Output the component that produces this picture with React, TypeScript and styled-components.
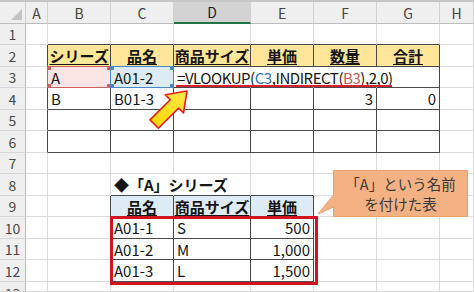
import React from "react";
import styled, { createGlobalStyle } from "styled-components";

const GlobalStyle = createGlobalStyle`
  html, body {
    margin: 0;
    padding: 0;
    background: #fff;
  }
  body {
    font-family: "Noto Sans CJK JP", "Noto Sans", sans-serif;
    overflow: hidden;
  }
`;

const COLS = ["A", "B", "C", "D", "E", "F", "G", "H"];
const COL_W = [22, 63, 63, 77, 63, 63, 63, 34];
const ROW_H = [21, 22, 21, 22, 21, 22, 21, 22, 21, 22, 21, 22, 10];

const GRID = "#dcdcdc";
const LINE = "#4a4a4a";
const GOLD = "#ffe699";
const ICE = "#ddebf7";

type CellDef = {
  text?: React.ReactNode;
  align?: "left" | "center" | "right";
  bold?: boolean;
  head?: boolean;
  fill?: string;
  refColor?: string;
};

const Formula = () => (
  <FormulaText>
    =VLOOKUP(<Ref $c="#2e75b6">C3</Ref>,INDIRECT(<Ref $c="#c55a5a">B3</Ref>),2,0)
  </FormulaText>
);

const cells: Record<string, CellDef> = {
  B2: { text: "シリーズ", head: true, fill: GOLD, align: "center" },
  C2: { text: "品名", head: true, fill: GOLD, align: "center" },
  D2: { text: "商品サイズ", head: true, fill: GOLD, align: "center" },
  E2: { text: "単価", head: true, fill: GOLD, align: "center" },
  F2: { text: "数量", head: true, fill: GOLD, align: "center" },
  G2: { text: "合計", head: true, fill: GOLD, align: "center" },
  B3: { text: "A", fill: "#fbe4e4", refColor: "#d06060" },
  C3: { text: "A01-2", fill: ICE, refColor: "#4a86c8" },
  D3: { text: <Formula /> },
  B4: { text: "B" },
  C4: { text: "B01-3" },
  F4: { text: "3", align: "right" },
  G4: { text: "0", align: "right" },
  C8: { text: "◆「A」シリーズ", bold: true },
  C9: { text: "品名", head: true, fill: ICE, align: "center" },
  D9: { text: "商品サイズ", head: true, fill: ICE, align: "center" },
  E9: { text: "単価", head: true, fill: ICE, align: "center" },
  C10: { text: "A01-1" },
  D10: { text: "S" },
  E10: { text: "500", align: "right" },
  C11: { text: "A01-2" },
  D11: { text: "M" },
  E11: { text: "1,000", align: "right" },
  C12: { text: "A01-3" },
  D12: { text: "L" },
  E12: { text: "1,500", align: "right" },
};

// cells whose text spills into the next column, so the gridline is hidden
const spill = new Set(["D3", "E3", "F3", "C8"]);

const inTable = (r: number, c: number) =>
  (r >= 2 && r <= 6 && c >= 1 && c <= 6) || (r >= 9 && r <= 12 && c >= 2 && c <= 4);

export default function App() {
  return (
    <>
      <GlobalStyle />
      <TopBar />
      <Sheet>
        <Corner />
        {COLS.map((l) => (
          <ColHead key={l} $active={l === "D"}>
            {l}
          </ColHead>
        ))}
        {ROW_H.map((h, i) => {
          const r = i + 1;
          return (
            <React.Fragment key={r}>
              <RowHead $short={h < 20}>{r}</RowHead>
              {COLS.map((l, c) => {
                const id = `${l}${r}`;
                const def = cells[id] ?? {};
                const right = spill.has(id)
                  ? "transparent"
                  : inTable(r, c) || inTable(r, c + 1)
                  ? LINE
                  : GRID;
                const bottom = inTable(r, c) || inTable(r + 1, c) ? LINE : GRID;
                return (
                  <Cell
                    key={id}
                    $right={right}
                    $bottom={bottom}
                    $fill={def.fill}
                    $align={def.align ?? "left"}
                    $bold={def.head || def.bold}
                    $under={def.head}
                    $ref={def.refColor}
                  >
                    {def.text}
                  </Cell>
                );
              })}
            </React.Fragment>
          );
        })}

        <FormulaLine />
        <NamedRange />
        <Arrow viewBox="0 0 44 44" width="44" height="44">
          <defs>
            <linearGradient id="ag" x1="0" y1="1" x2="1" y2="0">
              <stop offset="0" stopColor="#ffd400" />
              <stop offset="1" stopColor="#ffe94a" />
            </linearGradient>
          </defs>
          <polygon
            points="40,4 36.5,26 31.6,21.1 11.4,41.3 3,32.9 23.2,12.7 18.3,7.8"
            fill="url(#ag)"
            stroke="#e3201b"
            strokeWidth="1.6"
            strokeLinejoin="round"
          />
        </Arrow>
        <Callout>
          <CalloutShape viewBox="0 0 152 48" width="152" height="48">
            <path
              d="M17.5 0.5 H151.5 V46.5 H17.5 V37 L2 44 L17.5 25 Z"
              fill="#f4b183"
              stroke="#e8a070"
              strokeWidth="1"
            />
          </CalloutShape>
          <CalloutText>
            「A」という名前
            <br />
            を付けた表
          </CalloutText>
        </Callout>
      </Sheet>
    </>
  );
}

const TopBar = styled.div`
  height: 2px;
  background: #c6c6c6;
`;

const Sheet = styled.div`
  position: relative;
  display: grid;
  grid-template-columns: 26px ${COL_W.map((w) => `${w}px`).join(" ")};
  grid-template-rows: 22px ${ROW_H.map((h) => `${h}px`).join(" ")};
  width: 474px;
  height: 290px;
  overflow: hidden;
`;

const Corner = styled.div`
  position: relative;
  background: #efefef;
  border-right: 1px solid #cfcfcf;
  border-bottom: 1px solid #bdbdbd;
  box-sizing: border-box;
  &::after {
    content: "";
    position: absolute;
    right: 3px;
    bottom: 3px;
    border-left: 11px solid transparent;
    border-bottom: 11px solid #c3c3c3;
  }
`;

const ColHead = styled.div<{ $active?: boolean }>`
  display: flex;
  align-items: center;
  justify-content: center;
  box-sizing: border-box;
  background: ${(p) => (p.$active ? "#d3d3d3" : "#efefef")};
  border-right: 1px solid #d2d2d2;
  border-bottom: ${(p) => (p.$active ? "2px solid #217346" : "1px solid #bdbdbd")};
  color: ${(p) => (p.$active ? "#1f1f1f" : "#444")};
  font-size: 14px;
`;

const RowHead = styled.div<{ $short?: boolean }>`
  display: flex;
  align-items: ${(p) => (p.$short ? "flex-start" : "center")};
  justify-content: center;
  box-sizing: border-box;
  background: #efefef;
  border-right: 1px solid #bdbdbd;
  border-bottom: 1px solid #d5d5d5;
  color: #4a4a4a;
  font-size: 14px;
  line-height: ${(p) => (p.$short ? "16px" : "normal")};
  padding-top: ${(p) => (p.$short ? "3px" : "0")};
  overflow: hidden;
`;

const Cell = styled.div<{
  $right: string;
  $bottom: string;
  $fill?: string;
  $align: "left" | "center" | "right";
  $bold?: boolean;
  $under?: boolean;
  $ref?: string;
}>`
  position: relative;
  display: flex;
  align-items: center;
  justify-content: ${(p) =>
    p.$align === "center" ? "center" : p.$align === "right" ? "flex-end" : "flex-start"};
  box-sizing: border-box;
  padding: 0 3px;
  min-width: 0;
  border-right: 1px solid ${(p) => p.$right};
  border-bottom: 1px solid ${(p) => p.$bottom};
  background: ${(p) => p.$fill ?? "transparent"};
  color: #161616;
  font-size: 15px;
  font-weight: ${(p) => (p.$bold ? 700 : 400)};
  text-decoration: ${(p) => (p.$under ? "underline" : "none")};
  text-underline-offset: 2px;
  white-space: nowrap;
  z-index: ${(p) => (p.$ref ? 1 : "auto")};

  ${(p) =>
    p.$ref &&
    `
    &::after {
      content: "";
      position: absolute;
      left: -1px;
      top: -1px;
      right: -1px;
      bottom: -1px;
      border: 1px solid ${p.$ref};
      background:
        linear-gradient(${p.$ref}, ${p.$ref}) 0 0 / 3px 3px no-repeat,
        linear-gradient(${p.$ref}, ${p.$ref}) 100% 0 / 3px 3px no-repeat,
        linear-gradient(${p.$ref}, ${p.$ref}) 0 100% / 3px 3px no-repeat,
        linear-gradient(${p.$ref}, ${p.$ref}) 100% 100% / 3px 3px no-repeat;
    }
  `}
`;

const FormulaText = styled.span`
  letter-spacing: -0.45px;
`;

const Ref = styled.span<{ $c: string }>`
  color: ${(p) => p.$c};
`;

const FormulaLine = styled.div`
  position: absolute;
  left: 176px;
  top: 83px;
  width: 216px;
  height: 2px;
  background: #d6202b;
`;

const NamedRange = styled.div`
  position: absolute;
  left: 110px;
  top: 214px;
  width: 208px;
  height: 69px;
  box-sizing: border-box;
  border: 3px solid #d2141e;
`;

const Arrow = styled.svg`
  position: absolute;
  left: 147px;
  top: 85px;
`;

const Callout = styled.div`
  position: absolute;
  left: 316px;
  top: 168px;
  width: 152px;
  height: 48px;
`;

const CalloutShape = styled.svg`
  position: absolute;
  inset: 0;
`;

const CalloutText = styled.div`
  position: relative;
  margin-left: 17px;
  height: 48px;
  display: flex;
  flex-direction: column;
  align-items: center;
  justify-content: center;
  text-align: center;
  color: #3a3a3a;
  font-size: 14.5px;
  line-height: 20px;
`;
